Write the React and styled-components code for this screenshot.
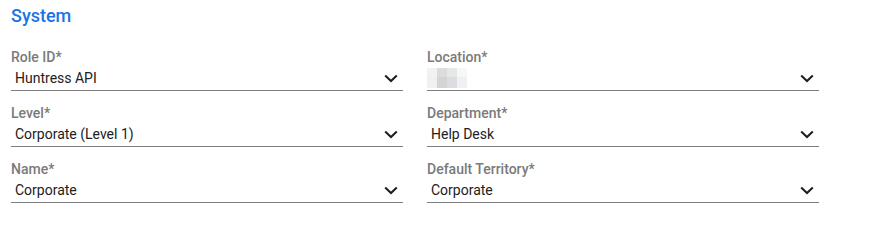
import React from "react";
import styled, { createGlobalStyle } from "styled-components";

const Global = createGlobalStyle`
  html, body { margin: 0; padding: 0; background: #fff; }
  body { font-family: Roboto, "Liberation Sans", Arial, sans-serif; }
`;

const Page = styled.div`
  padding: 5px 0 0 11px;
  width: 808px;
`;

const Title = styled.h2`
  margin: 0 0 22px 0;
  font-size: 18px;
  line-height: 22px;
  font-weight: 500;
  color: #1a73e8;
`;

const Grid = styled.div`
  display: grid;
  grid-template-columns: 392px 392px;
  column-gap: 24px;
  row-gap: 14px;
`;

const Field = styled.div`
  display: flex;
  flex-direction: column;
`;

const Label = styled.div`
  font-size: 14px;
  line-height: 16px;
  font-weight: 500;
  color: #7a7a7a;
`;

const Control = styled.div`
  display: flex;
  align-items: center;
  justify-content: space-between;
  height: 24px;
  padding: 1px 5px 0 4px;
  border-bottom: 1px solid #7c7c7c;
`;

const Value = styled.span`
  font-size: 14px;
  line-height: 16px;
  color: #212121;
`;

const Blur = styled.div`
  display: grid;
  grid-template-columns: repeat(4, 10px);
  grid-template-rows: 9px 11px;
  margin-left: -4px;
`;

const Px = styled.div`
  background: ${(p) => p.$c};
`;

const Chevron = () => (
  <svg width="14" height="9" viewBox="0 0 14 9">
    <path d="M1.2 1.5 L7 7 L12.8 1.5" fill="none" stroke="#1c1c1c" strokeWidth="2" />
  </svg>
);

const blurColors = ["#f3f2f0", "#dcdcdc", "#e6e8e6", "#f6f8f8", "#f0eff2", "#d4d4d4", "#dcdde0", "#f0f0f0"];

const fields = [
  { label: "Role ID*", value: "Huntress API" },
  { label: "Location*", blur: true },
  { label: "Level*", value: "Corporate (Level 1)" },
  { label: "Department*", value: "Help Desk" },
  { label: "Name*", value: "Corporate" },
  { label: "Default Territory*", value: "Corporate" },
];

export default function App() {
  return (
    <>
      <Global />
      <Page>
        <Title>System</Title>
        <Grid>
          {fields.map((f) => (
            <Field key={f.label}>
              <Label>{f.label}</Label>
              <Control>
                {f.blur ? (
                  <Blur>
                    {blurColors.map((c, i) => (
                      <Px key={i} $c={c} />
                    ))}
                  </Blur>
                ) : (
                  <Value>{f.value}</Value>
                )}
                <Chevron />
              </Control>
            </Field>
          ))}
        </Grid>
      </Page>
    </>
  );
}
